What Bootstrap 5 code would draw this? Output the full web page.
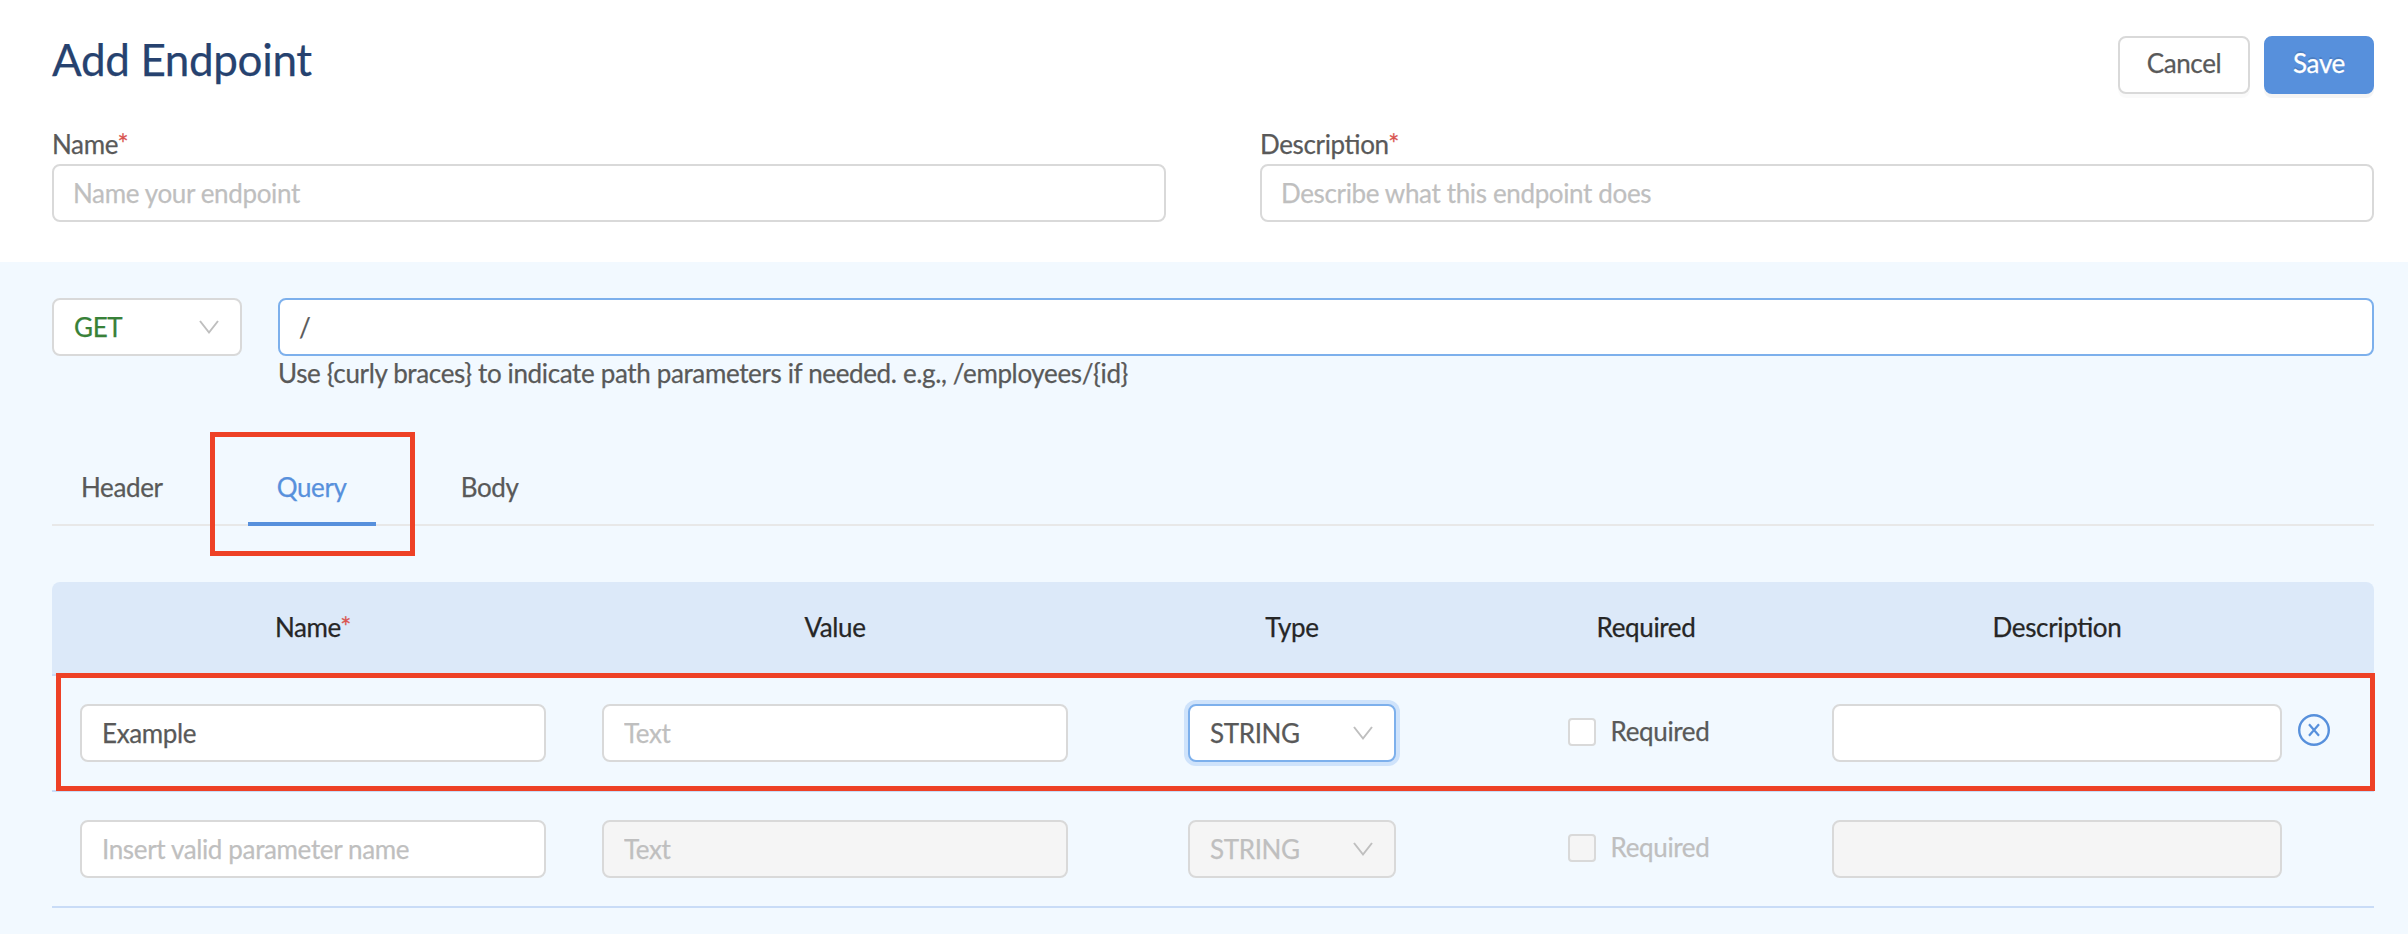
<!DOCTYPE html>
<html lang="en">
<head>
<meta charset="utf-8">
<meta name="viewport" content="width=device-width, initial-scale=1">
<title>Add Endpoint</title>
<link href="https://cdn.jsdelivr.net/npm/bootstrap@5.3.0/dist/css/bootstrap.min.css" rel="stylesheet">
<style>
  body { font-family: Lato, "Liberation Sans", sans-serif; font-size: 26px; line-height: 36px; color: #595959; background: #f2f9ff; letter-spacing: -.36px; font-feature-settings: "liga" 1; -webkit-text-stroke: .25px currentColor; }
  input, button { letter-spacing: inherit !important; }
  .top-panel { height: 262px; padding: 36px 34px 0 52px; }
  .page-title { font-size: 44px; line-height: 52px; color: #26426f; font-weight: 400; margin-top: -3px; margin-bottom: 0; }
  .field-label { line-height: 34px; margin-top: 33px; padding-bottom: 3px; }
  .req { color: #d9534f; }
  .actions { gap: 14px; }
  .btn-box { height: 58px; border: 2px solid #d9d9d9; border-radius: 8px; font-size: 26px; line-height: 30px; padding: 0 0 5px; box-shadow: 0 4px 0 rgba(0,0,0,.02); }
  .btn-cancel { width: 132px; color: #595959; background: #fff; }
  .btn-save { width: 110px; color: #fff; background: #5790dc; border-color: #5790dc; text-shadow: 0 -2px 0 rgba(0,0,0,.12); box-shadow: 0 4px 0 rgba(0,0,0,.045); }
  .field { height: 58px; border: 2px solid #d9d9d9; border-radius: 8px; font-size: 26px; line-height: 36px; color: #595959; background: #fff; padding: 0 20px; box-shadow: none; }
  input.field { padding-bottom: 1px; padding-left: 19px; }
  td input.field { padding-left: 20px; }
  .field::placeholder { color: #bfbfbf; }
  .field:disabled, .field.off { background: #f5f5f5; color: #bfbfbf; opacity: 1; }
  .field.active-line { border-color: #7db0ec; }
  .field.ring { box-shadow: 0 0 0 4px #cfe3fb; }
  .columns { gap: 94px; }
  .main-panel { padding: 36px 34px 0 52px; }
  .path-row { gap: 36px; }
  .method { width: 190px; color: #388138; }
  .type-box { width: 208px; }
  .hint { line-height: 34px; padding-bottom: 2px; }
  .tabs { height: 98px; margin-top: 36px; border-bottom: 2px solid #e8e8e8; gap: 56px; }
  .tabs .tab-item { padding: 41px 29px 0; height: 98px; color: #595959; text-decoration: none; }
  .tabs .tab-item.on { color: #5790dc; border-bottom: 4px solid #5790dc; }
  .mark-box { position: absolute; border: 5px solid #ee4126; pointer-events: none; }
  .mark-tab { left: -38px; top: 4px; width: 205px; height: 124px; }
  .mark-row { left: 4px; top: 91px; width: 2319px; height: 118px; }
  .params { margin: 56px 0 0; table-layout: fixed; width: 2322px; border-collapse: separate; border-spacing: 0; }
  .params th { height: 94px; padding: 0 0 2px; font-weight: 400; color: #262626; background: #dce9f9; text-align: center; vertical-align: middle; border-bottom: 2px solid #c9dcf7; }
  .params th:first-child { border-top-left-radius: 8px; }
  .params th:last-child { border-top-right-radius: 8px; }
  .params td { height: 116px; padding: 0 28px; border-bottom: 2px solid #c9dcf7; vertical-align: middle; }
  .params td.act { padding: 0; }
  .w-name { width: 522px; } .w-type { width: 392px; } .w-req { width: 316px; } .w-desc { width: 506px; } .w-act { width: 64px; }
  .tick { width: 28px; height: 28px; border: 2px solid #d9d9d9; border-radius: 4px; background: #fff; }
  .check { gap: 15px; padding: 0 15px 2px 0; }
  .tick-text { padding-bottom: 2px; }
  .check.off { color: #bfbfbf; } .check.off .tick { background: #f5f5f5; }
  .remove { margin: -6px 0 0 -12px; }
</style>
</head>
<body>
<header class="top-panel bg-white">
  <div class="d-flex justify-content-between align-items-start">
    <h1 class="page-title">Add Endpoint</h1>
    <div class="d-flex actions">
      <button class="btn btn-box btn-cancel">Cancel</button>
      <button class="btn btn-box btn-save">Save</button>
    </div>
  </div>
  <div class="d-flex columns">
    <div class="flex-fill w-50"><div class="field-label">Name<span class="req">*</span></div><input class="form-control field" placeholder="Name your endpoint"></div>
    <div class="flex-fill w-50"><div class="field-label">Description<span class="req">*</span></div><input class="form-control field" placeholder="Describe what this endpoint does"></div>
  </div>
</header>
<main class="main-panel">
  <div class="d-flex align-items-start path-row">
    <div class="field method d-flex align-items-center justify-content-between flex-shrink-0"><span>GET</span>
      <svg width="22" height="16" viewBox="0 0 22 16" fill="none" stroke="#bfbfbf" stroke-width="2"><path d="M2 2l9 11.5L20 2"/></svg></div>
    <div class="flex-grow-1"><input class="form-control field active-line" value="/"><div class="hint">Use {curly braces} to indicate path parameters if needed. e.g., /employees/{id}</div></div>
  </div>
  <nav class="tabs d-flex">
    <a class="tab-item">Header</a>
    <a class="tab-item on position-relative">Query<span class="mark-box mark-tab"></span></a>
    <a class="tab-item">Body</a>
  </nav>
  <div class="position-relative">
    <table class="params">
      <colgroup><col class="w-name"><col class="w-name"><col class="w-type"><col class="w-req"><col class="w-desc"><col class="w-act"></colgroup>
      <thead><tr><th>Name<span class="req">*</span></th><th>Value</th><th>Type</th><th>Required</th><th>Description</th><th></th></tr></thead>
      <tbody>
        <tr>
          <td><input class="form-control field" value="Example"></td>
          <td><input class="form-control field" placeholder="Text"></td>
          <td><div class="field type-box active-line ring d-flex align-items-center justify-content-between mx-auto"><span>STRING</span>
            <svg width="22" height="16" viewBox="0 0 22 16" fill="none" stroke="#bfbfbf" stroke-width="2"><path d="M2 2l9 11.5L20 2"/></svg></div></td>
          <td><div class="check d-flex align-items-center justify-content-center"><span class="tick"></span><span class="tick-text">Required</span></div></td>
          <td><input class="form-control field"></td>
          <td class="act"><svg class="remove d-block" width="32" height="32" viewBox="0 0 32 32" fill="none" stroke="#5790dc"><circle cx="16" cy="16" r="14.8" stroke-width="2.4"/><path d="M11 10.2l10 11.6M21 10.2L11 21.8" stroke-width="2.2"/></svg></td>
        </tr>
        <tr>
          <td><input class="form-control field" placeholder="Insert valid parameter name"></td>
          <td><input class="form-control field" placeholder="Text" disabled></td>
          <td><div class="field off type-box d-flex align-items-center justify-content-between mx-auto"><span>STRING</span>
            <svg width="22" height="16" viewBox="0 0 22 16" fill="none" stroke="#bfbfbf" stroke-width="2"><path d="M2 2l9 11.5L20 2"/></svg></div></td>
          <td><div class="check off d-flex align-items-center justify-content-center"><span class="tick"></span><span class="tick-text">Required</span></div></td>
          <td><input class="form-control field" disabled></td>
          <td class="act"></td>
        </tr>
      </tbody>
    </table>
    <span class="mark-box mark-row"></span>
  </div>
</main>
<script src="https://cdn.jsdelivr.net/npm/bootstrap@5.3.0/dist/js/bootstrap.bundle.min.js"></script>
</body>
</html>
